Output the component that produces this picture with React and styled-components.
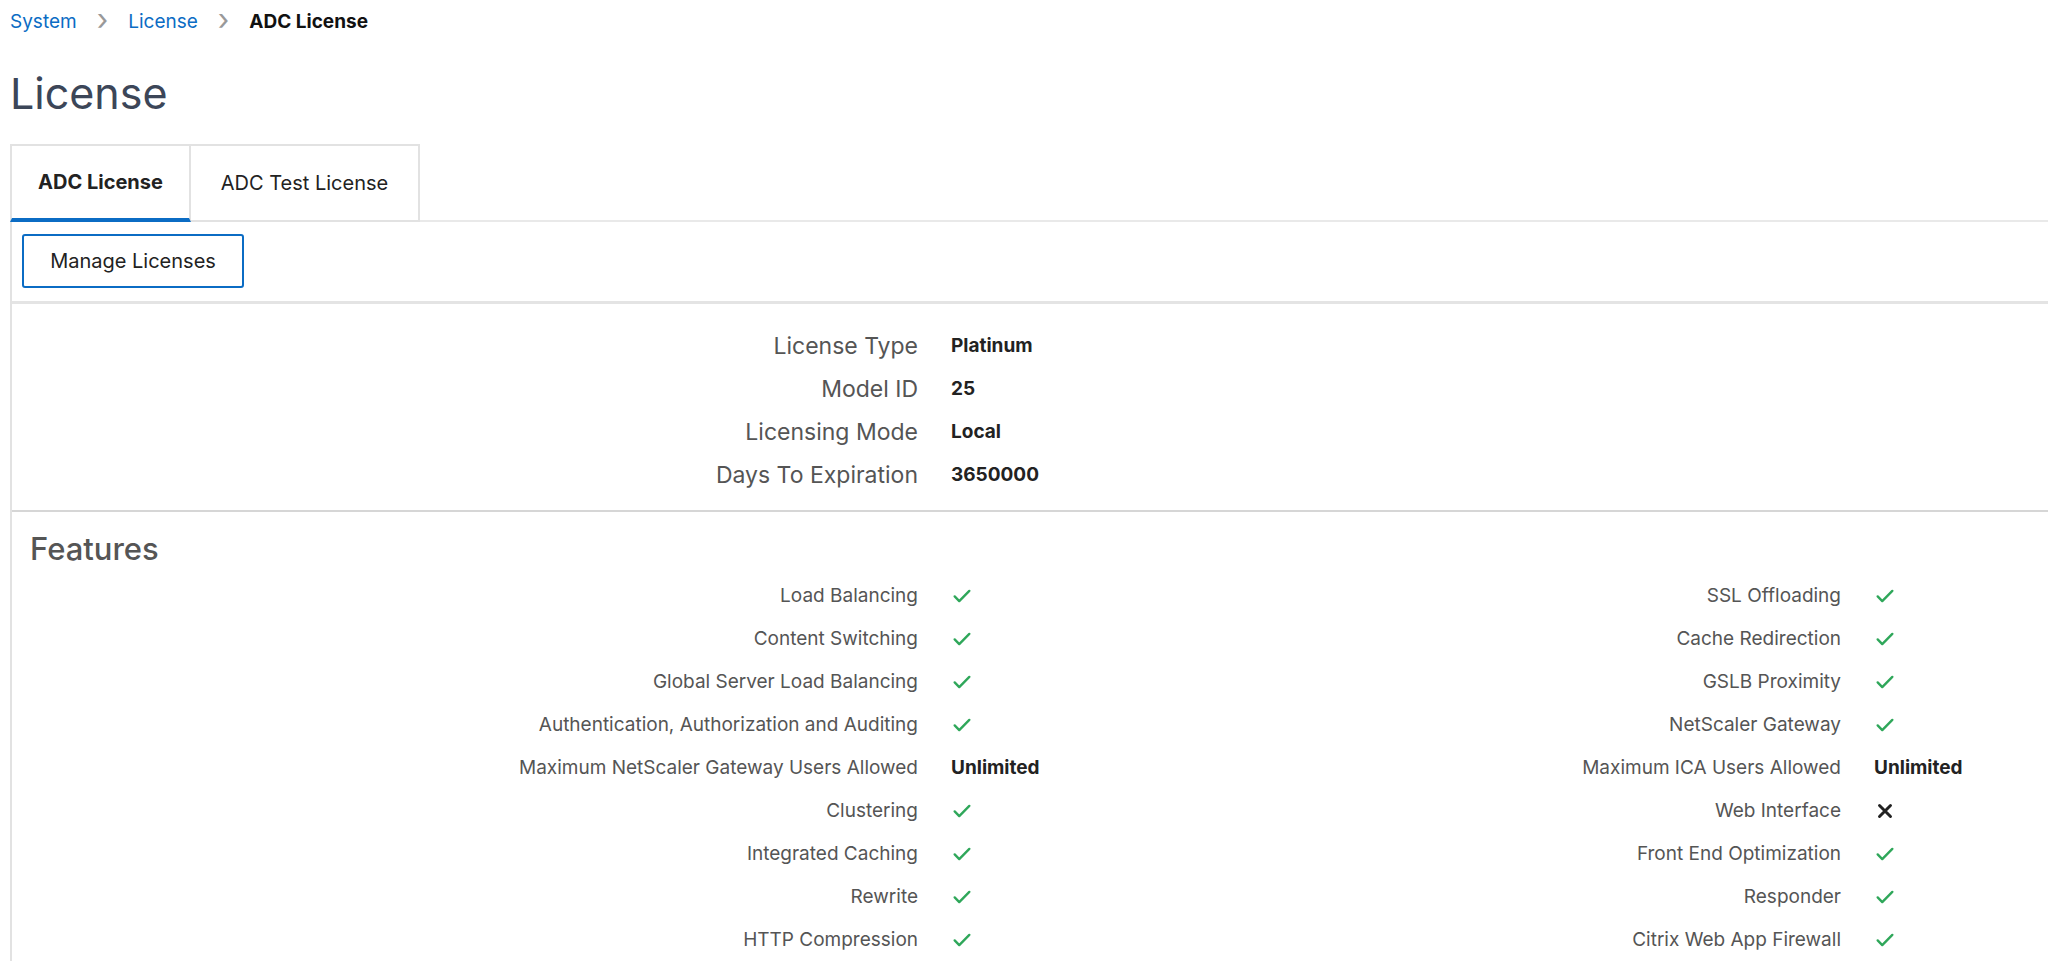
import React from "react"
import styled, { createGlobalStyle } from "styled-components"

const Global = createGlobalStyle`
  body { margin: 0; background: #fff; font-family: Inter, "Noto Sans", sans-serif; }
`

const info = [
  ["License Type", "Platinum"],
  ["Model ID", "25"],
  ["Licensing Mode", "Local"],
  ["Days To Expiration", "3650000"],
]

const features = [
  ["Load Balancing", true, "SSL Offloading", true],
  ["Content Switching", true, "Cache Redirection", true],
  ["Global Server Load Balancing", true, "GSLB Proximity", true],
  ["Authentication, Authorization and Auditing", true, "NetScaler Gateway", true],
  ["Maximum NetScaler Gateway Users Allowed", "Unlimited", "Maximum ICA Users Allowed", "Unlimited"],
  ["Clustering", true, "Web Interface", false],
  ["Integrated Caching", true, "Front End Optimization", true],
  ["Rewrite", true, "Responder", true],
  ["HTTP Compression", true, "Citrix Web App Firewall", true],
]

function Check() {
  return (
    <svg width="22" height="22" viewBox="0 0 24 24" fill="none" stroke="#2fa75a" strokeWidth="2.6" strokeLinecap="round" strokeLinejoin="round">
      <path d="M4 12.5l5 5L20 6.5" />
    </svg>
  )
}

function Cross() {
  return (
    <svg width="22" height="22" viewBox="0 0 24 24" fill="none" stroke="#222" strokeWidth="3.2" strokeLinecap="round">
      <path d="M6 6l12 12M18 6L6 18" />
    </svg>
  )
}

function Value({ v }) {
  if (v === true) return <Check />
  if (v === false) return <Cross />
  return <Bold>{v}</Bold>
}

export default function App() {
  return (
    <Page>
      <Global />
      <Crumbs>
        <CrumbLink>System</CrumbLink>
        <Sep>&#x203A;</Sep>
        <CrumbLink>License</CrumbLink>
        <Sep>&#x203A;</Sep>
        <CrumbCurrent>ADC License</CrumbCurrent>
      </Crumbs>
      <Title>License</Title>
      <Tabs>
        <Tab active>ADC License</Tab>
        <Tab>ADC Test License</Tab>
      </Tabs>
      <Panel>
        <Toolbar>
          <Button>Manage Licenses</Button>
        </Toolbar>
        <InfoGrid>
          {info.map(([k, v]) => (
            <React.Fragment key={k}>
              <InfoLabel>{k}</InfoLabel>
              <Bold>{v}</Bold>
            </React.Fragment>
          ))}
        </InfoGrid>
        <Features>
          <FeatTitle>Features</FeatTitle>
          <FeatGrid>
            {features.map(([a, av, b, bv]) => (
              <React.Fragment key={a}>
                <FeatLabel>{a}</FeatLabel>
                <Cell><Value v={av} /></Cell>
                <FeatLabel>{b}</FeatLabel>
                <Cell><Value v={bv} /></Cell>
              </React.Fragment>
            ))}
          </FeatGrid>
        </Features>
      </Panel>
    </Page>
  )
}

const Page = styled.div`
  padding: 0 0 0 10px;
  min-height: 962px;
`

const Crumbs = styled.nav`
  display: flex;
  align-items: center;
  gap: 20px;
  height: 42px;
  font-size: 19px;
`

const CrumbLink = styled.span`
  color: #0b6cc4;
`

const Sep = styled.span`
  color: #999;
  font-size: 30px;
  line-height: 1;
  margin-top: -4px;
`

const CrumbCurrent = styled.span`
  color: #111;
  font-weight: 700;
`

const Title = styled.h1`
  margin: 30px 0 0;
  font-size: 43px;
  font-weight: 400;
  color: #3c4658;
  line-height: 1;
  height: 72px;
`

const Tabs = styled.div`
  display: flex;
`

const Tab = styled.div`
  height: 78px;
  box-sizing: border-box;
  display: flex;
  align-items: center;
  padding: 0 22px;
  font-size: 20px;
  color: #222;
  font-weight: ${p => (p.active ? 700 : 400)};
  border: 2px solid #e2e2e2;
  border-left-width: ${p => (p.active ? "2px" : "0")};
  border-bottom: ${p => (p.active ? "4px solid #0b6cc4" : "2px solid #e2e2e2")};
  width: ${p => (p.active ? "181px" : "229px")};
  justify-content: center;
`

const Panel = styled.div`
  border-left: 2px solid #e2e2e2;
  border-top: 2px solid #e9e9e9;
  margin-top: -2px;
`

const Toolbar = styled.div`
  padding: 12px 10px 13px;
  border-bottom: 3px solid #e4e4e4;
`

const Button = styled.button`
  height: 54px;
  width: 222px;
  background: #fff;
  border: 2px solid #0b6cc4;
  border-radius: 3px;
  font-family: Inter, "Noto Sans", sans-serif;
  font-size: 20px;
  color: #222;
`

const InfoGrid = styled.div`
  display: grid;
  grid-template-columns: 906px 1fr;
  column-gap: 33px;
  row-gap: 0;
  grid-auto-rows: 43px;
  align-items: center;
  padding: 20px 0 14px;
  border-bottom: 2px solid #d6d6d6;
`

const InfoLabel = styled.div`
  text-align: right;
  font-size: 23px;
  color: #555;
`

const Bold = styled.span`
  font-size: 19px;
  font-weight: 700;
  color: #222;
`

const Features = styled.section`
  padding: 10px 0 0;
`

const FeatTitle = styled.h2`
  margin: 0 0 0 18px;
  font-size: 31px;
  font-weight: 500;
  color: #555;
  height: 52px;
  display: flex;
  align-items: center;
`

const FeatGrid = styled.div`
  display: grid;
  grid-template-columns: 906px 200px 657px 1fr;
  column-gap: 33px;
  grid-auto-rows: 43px;
  align-items: center;
`

const FeatLabel = styled.div`
  text-align: right;
  font-size: 19px;
  color: #555;
`

const Cell = styled.div`
  display: flex;
  align-items: center;
  margin-left: ${0}px;
`
